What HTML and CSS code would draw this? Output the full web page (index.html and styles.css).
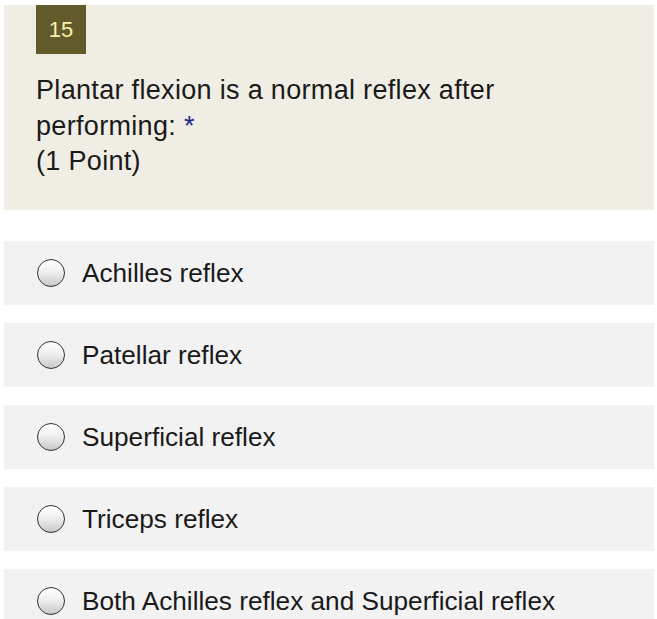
FILE: index.html
```html
<!DOCTYPE html>
<html>
<head>
<meta charset="utf-8">
<link rel="stylesheet" href="styles.css">
</head>
<body>
<div class="page">
  <div class="question">
    <div class="badge">15</div>
    <div class="qtext">Plantar flexion is a normal reflex after performing:&nbsp;<span class="req">*</span><br>(1 Point)</div>
  </div>
  <div class="options">
    <div class="option"><span class="radio"></span><span class="label">Achilles reflex</span></div>
    <div class="option"><span class="radio"></span><span class="label">Patellar reflex</span></div>
    <div class="option"><span class="radio"></span><span class="label">Superficial reflex</span></div>
    <div class="option"><span class="radio"></span><span class="label">Triceps reflex</span></div>
    <div class="option"><span class="radio"></span><span class="label">Both Achilles reflex and Superficial reflex</span></div>
  </div>
</div>
</body>
</html>
```

FILE: styles.css
```css
html, body {
  margin: 0;
  padding: 0;
  background: #ffffff;
  font-family: "Liberation Sans", Arial, sans-serif;
  color: #1a1a1a;
  overflow: hidden;
}
.page {
  padding: 5px 3px 0 4px;
}
.question {
  background: #f0ede4;
  height: 205px;
  box-sizing: border-box;
  padding: 0 32px;
}
.badge {
  width: 50px;
  height: 49px;
  background: #625a2b;
  color: #f6f1ab;
  font-size: 22px;
  display: flex;
  align-items: center;
  justify-content: center;
}
.qtext {
  margin-top: 19px;
  font-size: 27px;
  letter-spacing: 0.32px;
  line-height: 35.5px;
  width: 520px;
}
.req {
  color: #1f2a8a;
}
.options {
  margin-top: 31px;
  display: flex;
  flex-direction: column;
  gap: 18px;
}
.option {
  background: #f2f2f2;
  height: 64px;
  display: flex;
  align-items: center;
  padding-left: 33px;
}
.radio {
  width: 26px;
  height: 26px;
  border: 1.5px solid #333;
  border-radius: 50%;
  background: linear-gradient(180deg, #ffffff 0%, #f0f0f0 45%, #c8c8c8 100%);
  flex: none;
}
.label {
  margin-left: 17px;
  font-size: 26.2px;
}
```
